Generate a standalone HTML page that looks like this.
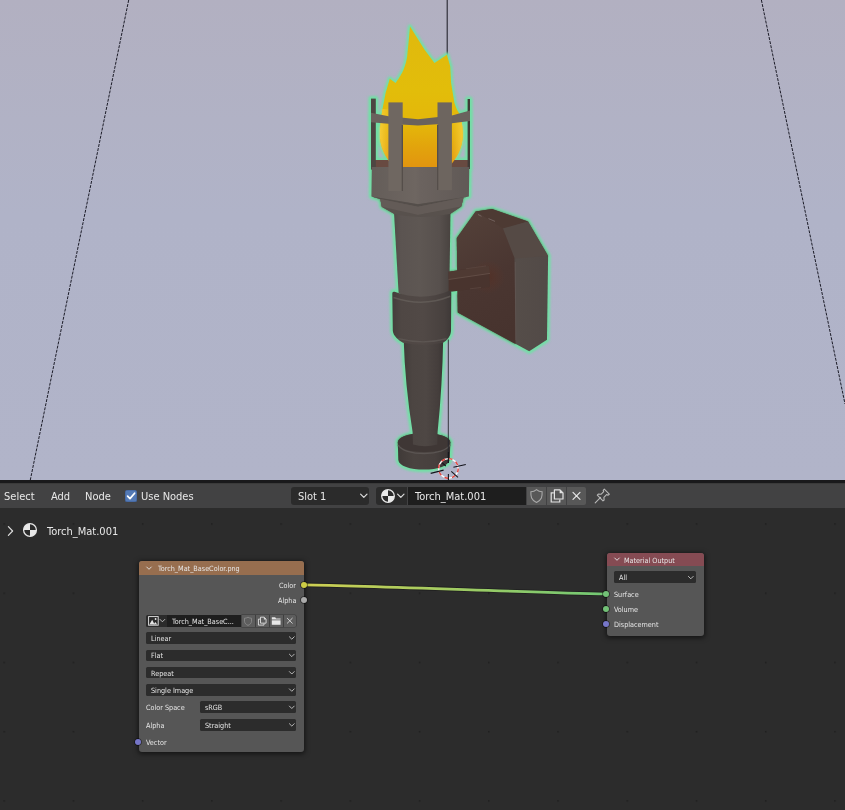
<!DOCTYPE html>
<html>
<head>
<meta charset="utf-8">
<title>Blender - Torch</title>
<style>
html,body{margin:0;padding:0;background:#2c2c2c;}
body{width:845px;height:810px;position:relative;overflow:hidden;font-family:"DejaVu Sans Condensed","DejaVu Sans","Liberation Sans",sans-serif;font-stretch:condensed;color:#e6e6e6;}
.abs{position:absolute;}
#view{position:absolute;left:0;top:0;width:845px;height:480px;background:linear-gradient(180deg,#b2b0c1 0%,#b1b2c5 25%,#b0b3c8 45%,#b1b4c9 100%);overflow:hidden;}
#sep{position:absolute;left:0;top:480px;width:845px;height:3px;background:#19191b;}
#hdr{position:absolute;left:0;top:483px;width:845px;height:24.6px;background:#424243;}
#ned{position:absolute;left:0;top:508px;width:845px;height:302px;background:#2c2c2c;overflow:hidden;}
.t11{will-change:transform;position:absolute;font-size:11px;line-height:14px;white-space:nowrap;color:#e8e8e8;}
.t7{will-change:transform;margin-top:.9px;position:absolute;font-size:7.2px;line-height:10px;white-space:nowrap;color:#e6e6e6;}
.fld{position:absolute;background:#2b2b2b;border-radius:2px;}
.btn{position:absolute;background:#585858;}
.node .btn{background:#5d5d5d;box-shadow:0 0 0 .6px #3c3c3c;}
.node{position:absolute;background:#565656;border-radius:3px;box-shadow:0 1px 5px 1px rgba(0,0,0,.55);}
.nh{position:absolute;left:0;top:0;right:0;border-radius:3px 3px 0 0;}
.sock{position:absolute;width:6px;height:6px;margin:.2px;border-radius:50%;box-shadow:0 0 0 .8px rgba(0,0,0,.5);}
.dd{position:absolute;background:#2c2c2c;border-radius:1.5px;height:11.6px;}
</style>
</head>
<body>
<div id="view">
<svg class="abs" style="left:0;top:0" width="845" height="480" viewBox="0 0 845 480">
<defs>
<linearGradient id="gFlame" x1="0" y1="26" x2="0" y2="168" gradientUnits="userSpaceOnUse">
<stop offset="0" stop-color="#e0b90e"/><stop offset=".45" stop-color="#e2bd0a"/><stop offset=".7" stop-color="#e4b60a"/><stop offset=".85" stop-color="#e2a40c"/><stop offset="1" stop-color="#e2940f"/>
</linearGradient>
<linearGradient id="gFlameEdge" x1="379" y1="0" x2="464" y2="0" gradientUnits="userSpaceOnUse">
<stop offset="0" stop-color="#f8cf3c" stop-opacity=".95"/><stop offset=".16" stop-color="#f6c830" stop-opacity="0"/><stop offset=".84" stop-color="#f6c830" stop-opacity="0"/><stop offset="1" stop-color="#f8cf3c" stop-opacity=".95"/>
</linearGradient>
<linearGradient id="gShaft" x1="394" y1="0" x2="451" y2="0" gradientUnits="userSpaceOnUse">
<stop offset="0" stop-color="#514b48"/><stop offset=".12" stop-color="#5b5451"/><stop offset=".45" stop-color="#5e5753"/><stop offset=".8" stop-color="#57504d"/><stop offset="1" stop-color="#48423f"/>
</linearGradient>
<linearGradient id="gCollar" x1="392" y1="0" x2="454" y2="0" gradientUnits="userSpaceOnUse">
<stop offset="0" stop-color="#433d3b"/><stop offset=".15" stop-color="#4f4744"/><stop offset=".5" stop-color="#514946"/><stop offset=".85" stop-color="#47403e"/><stop offset="1" stop-color="#3a3534"/>
</linearGradient>
<linearGradient id="gLow" x1="404" y1="0" x2="444" y2="0" gradientUnits="userSpaceOnUse">
<stop offset="0" stop-color="#413b39"/><stop offset=".2" stop-color="#4c4542"/><stop offset=".55" stop-color="#4e4744"/><stop offset=".85" stop-color="#453e3c"/><stop offset="1" stop-color="#393433"/>
</linearGradient>
<linearGradient id="gFoot" x1="398" y1="0" x2="451" y2="0" gradientUnits="userSpaceOnUse">
<stop offset="0" stop-color="#403a38"/><stop offset=".3" stop-color="#4a4340"/><stop offset=".7" stop-color="#47403e"/><stop offset="1" stop-color="#383332"/>
</linearGradient>
<linearGradient id="gCup" x1="371" y1="0" x2="470" y2="0" gradientUnits="userSpaceOnUse">
<stop offset="0" stop-color="#645d59"/><stop offset=".45" stop-color="#6e6661"/><stop offset=".5" stop-color="#6b635f"/><stop offset="1" stop-color="#605956"/>
</linearGradient>
<linearGradient id="gPlate" x1="457" y1="230" x2="515" y2="330" gradientUnits="userSpaceOnUse">
<stop offset="0" stop-color="#523f38"/><stop offset=".5" stop-color="#4a3631"/><stop offset="1" stop-color="#47332e"/>
</linearGradient>
<linearGradient id="gPlateSide" x1="500" y1="0" x2="548" y2="0" gradientUnits="userSpaceOnUse">
<stop offset="0" stop-color="#4e423e"/><stop offset=".35" stop-color="#554d49"/><stop offset="1" stop-color="#524a47"/>
</linearGradient>
<radialGradient id="gRust" cx="488" cy="277" r="17" gradientUnits="userSpaceOnUse"><stop offset="0" stop-color="#5a2a1c" stop-opacity=".45"/><stop offset="1" stop-color="#6a3424" stop-opacity="0"/></radialGradient>
<filter id="bl" x="-10%" y="-10%" width="120%" height="120%"><feGaussianBlur stdDeviation=".85"/></filter>
<g id="torch">
<!-- cup interior -->
<path d="M372.5,160 H468.5 V172 H372.5 Z" fill="#684a41"/>
<!-- flame -->
<path d="M396,169 C388,162 381,150 380,138 C379.5,128 381,118 382.5,109 L385.6,93 L389.8,78.8 L395.6,83 C400,77 402,73 403,71 C406,64 407,58 407.2,56 L408.8,40 L410,26.6 L416.3,36.5 L424.6,49.8 L434.5,63 L446.9,54.7 L450.2,66.3 L451.1,83 L454.4,103 C456,108 458,112 460,114.5 C462,122 463,130 462.7,137 C462,147 458,158 447,169 Z" fill="url(#gFlame)" stroke-width="4.4"/>
<path d="M396,169 C388,162 381,150 380,138 C379.5,128 381,118 382.5,109 L460,114.5 C462,122 463,130 462.7,137 C462,147 458,158 447,169 Z" fill="url(#gFlameEdge)" stroke="none"/>
<!-- basket posts -->
<rect x="371" y="98.6" width="4.8" height="71" fill="#4d4642"/>
<rect x="467.6" y="99" width="2.4" height="70" fill="#3f3b37"/>
<!-- ring band -->
<path d="M371,112.8 L388.4,116.2 L418,119.3 L451.9,115.6 L470,110.6 L470,121 L451.9,123.2 L418,125.4 L388.4,123.8 L371,122.2 Z" fill="#6a625d"/>
<!-- cup block -->
<path d="M371.8,167 L469.3,167 L468.9,196.4 L463.5,197.5 L461.2,206.5 L450,214 L418,218 L394.6,214.1 L381.8,206.7 L380.3,199 L371.4,196.4 Z" fill="url(#gCup)"/>
<path d="M371.4,196.4 L418,204.3 L468.9,196.4 L463.5,197.5 L461.2,206.5 L450,214 L418,218 L394.6,214.1 L381.8,206.7 L380.3,199 Z" fill="#625a56" stroke="none"/>
<path d="M371.4,196.4 L418,204.3 L468.9,196.4 L463.5,197.5 L418,206.8 L380.3,199 Z" fill="#544e4a" stroke="none"/>
<!-- front planks -->
<rect x="388.4" y="102.4" width="14.3" height="88.6" fill="#6f6761"/>
<rect x="437.5" y="102.4" width="14.4" height="87.8" fill="#6d655f"/>
<rect x="401.7" y="125" width="1.3" height="66" fill="#554e4a" stroke="none"/>
<rect x="437" y="125" width="1.3" height="65" fill="#554e4a" stroke="none"/>
<!-- upper shaft -->
<path d="M394,213 L450.5,211.5 L449.3,292 Q422.6,307 398.6,293 Z" fill="url(#gShaft)"/>
<path d="M380.3,199 L418,206.8 L463.5,197.5 L461.2,206.5 L418,215 L381.8,206.7 Z" fill="#635b57" stroke="none"/><path d="M381.8,206.7 L418,215 L461.2,206.5 L450,214 Q420,220 394.6,214.1 Z" fill="#58514d" stroke="none"/>
<!-- wall plate -->
<path d="M456.8,238 L475.7,211.4 L492,209 L528,221.5 L548.1,255.9 L547,339.8 L529.2,351.3 L457.8,312.5 Z" fill="url(#gPlateSide)"/>
<path d="M475.7,211.4 L492,209 L528,221.5 L503,229.6 Z" fill="#4d3a33" stroke="none"/><path d="M502.5,228.6 L528,221.5 L548.1,255.9 L514.5,258.5 Z" fill="#554a45" stroke="none"/>
<path d="M456.8,238 L475.7,211.4 L503,228.6 L514.5,258 L515.5,343.9 L457.8,312.5 Z" fill="url(#gPlate)" stroke="none"/>
<ellipse cx="488" cy="277" rx="17" ry="17" fill="url(#gRust)" stroke="none"/>
<path d="M478,214.5 L481.5,216.3 M488.5,218.6 L495,221.4" stroke="#7a6a66" stroke-width="1" fill="none" opacity=".8"/>
<path d="M515.3,262 L515.8,340" stroke="#6a5d59" stroke-width=".8" fill="none" opacity=".55"/>
<!-- bracket arm -->
<path d="M448.6,271.8 L489,265.7 L490,287 L448.6,292 Z" fill="#49342e"/>
<path d="M448.6,271.8 L489,265.7 L490,273.4 L448.6,279.5 Z" fill="#4f3a33" stroke="none"/>
<path d="M448.6,279.5 L490,273.4" stroke="#6e5a52" stroke-width=".9" fill="none" opacity=".7"/>
<path d="M466,268.8 L486,266" stroke="#6a564e" stroke-width=".8" fill="none" opacity=".5"/>
<path d="M470,288.8 L481,287.5" stroke="#6a564e" stroke-width=".8" fill="none" opacity=".55"/>
<!-- foot -->
<path d="M397.8,442.5 L398.3,460 C399,466 410,469.6 424,469.6 C438,469.6 449,466 449.8,459 L450.3,442.5 C450.3,437 438,433 424,433 C410,433 397.8,437 397.8,442.5 Z" fill="url(#gFoot)"/>
<ellipse cx="424.05" cy="442.5" rx="26.2" ry="9.5" fill="#3f3735" stroke="none"/>
<path d="M398.2,445 C401,450.5 412,453.6 424.3,453.6 C437,453.6 447.5,450 450,444.8" fill="none" stroke="#5e5856" stroke-width="1.5" opacity=".85"/>
<!-- lower shaft -->
<path d="M403.6,338 L443.2,338 Q442.4,385 437.6,432 L437.3,444.5 Q425,448 413,444.5 L412.6,432 Q405,385 403.6,338 Z" fill="url(#gLow)"/>
<!-- collar -->
<path d="M392.3,294 C392.3,292 393,291.3 394.5,291.8 Q422.6,302 449.5,290.8 C450.8,290.5 451.3,291.5 451.3,293 L451,331 C450.8,336 447,340.5 443,342.8 Q423,346.5 403,342.8 C399,340.5 393.3,336 392.8,331 Z" fill="url(#gCollar)"/>
<path d="M393.5,297.5 Q422.6,307.5 450.3,296.3" fill="none" stroke="#706965" stroke-width="1.6" opacity=".55"/>
<path d="M398.5,338.6 Q423,345 446.5,338.8" fill="none" stroke="#6a6360" stroke-width="1.4" opacity=".5"/>

</g>
</defs>
<!-- guide lines -->
<line x1="128.7" y1="0" x2="30.3" y2="480" stroke="#1c1c28" stroke-width="1" stroke-dasharray="3 1.2"/>
<line x1="761.4" y1="0" x2="845" y2="404" stroke="#1c1c28" stroke-width="1" stroke-dasharray="3 1.2"/>
<line x1="447.2" y1="0" x2="447.2" y2="56" stroke="#25252e" stroke-width="1.1"/>
<!-- selection outline -->
<use href="#torch" stroke="#72dfa5" stroke-width="5.2" stroke-linejoin="round" filter="url(#bl)"/>
<use href="#torch"/>
<line x1="448.3" y1="339.5" x2="448.3" y2="463" stroke="#26262c" stroke-width=".9"/>
<!-- 3d cursor -->
<g>
<circle cx="448.4" cy="468.4" r="9.8" fill="none" stroke="#ffffff" stroke-width="1.4"/>
<circle cx="448.4" cy="468.4" r="9.8" fill="none" stroke="#e2403a" stroke-width="1.4" stroke-dasharray="3.85 3.85"/>
<path d="M430.7,473.4 L443.6,470.1 M453.4,467.3 L465.8,464.5 M448.4,474 L448.4,480 M448.4,463 L448.4,452 M451.3,471.3 L458,477.3 M445.8,466 L442.3,462.8" stroke="#15151c" stroke-width="1.1" fill="none"/>
</g>
</svg>


</div>
<div id="sep"></div>
<div id="hdr">
<div class="abs" style="left:0;top:0;width:845px;height:1px;background:#3a3a3a"></div>
<div class="t11" style="left:4.3px;top:6.9px">Select</div>
<div class="t11" style="left:51px;top:6.9px">Add</div>
<div class="t11" style="left:85.3px;top:6.9px">Node</div>
<div class="abs" style="left:125px;top:6.5px;width:12px;height:12px;border-radius:2.5px;background:#5379b5;box-shadow:0 0 0 .5px #3e5f96 inset"></div>
<svg class="abs" style="left:125px;top:6.5px" width="12" height="12" viewBox="0 0 12 12"><path d="M2.6,6.2 L5,8.6 L9.6,3.2" fill="none" stroke="#ffffff" stroke-width="1.7" stroke-linecap="round" stroke-linejoin="round"/></svg>
<div class="t11" style="left:141.3px;top:6.9px">Use Nodes</div>
<!-- slot dropdown -->
<div class="fld" style="left:291px;top:4px;width:78px;height:17.5px;border-radius:3px;background:#2b2b2b"></div>
<div class="t11" style="left:298.3px;top:6.9px">Slot 1</div>
<svg class="abs" style="left:359px;top:9px" width="10" height="8" viewBox="0 0 10 8"><path d="M1.6,2.2 L4.8,5.4 L8,2.2" fill="none" stroke="#dcdcdc" stroke-width="1.2" stroke-linecap="round" stroke-linejoin="round"/></svg>
<!-- material selector -->
<div class="fld" style="left:376px;top:4px;width:30.8px;height:17.5px;border-radius:3px 0 0 3px;background:#2b2b2b"></div>
<svg class="abs" style="left:379.5px;top:5px" width="16" height="16" viewBox="0 0 16 16">
<circle cx="8" cy="8" r="6.3" fill="#2b2b2b" stroke="#e9e9e9" stroke-width="1.3"/>
<path d="M8,8 L8,1.7 A6.3,6.3 0 0 0 1.7,8 Z" fill="#e9e9e9"/>
<path d="M8,8 L8,14.3 A6.3,6.3 0 0 0 14.3,8 Z" fill="#e9e9e9"/>
</svg>
<svg class="abs" style="left:396px;top:9px" width="10" height="8" viewBox="0 0 10 8"><path d="M1.6,2.2 L4.8,5.4 L8,2.2" fill="none" stroke="#dcdcdc" stroke-width="1.2" stroke-linecap="round" stroke-linejoin="round"/></svg>
<div class="fld" style="left:407.6px;top:4px;width:118.8px;height:17.5px;border-radius:0;background:#1e1e1e"></div>
<div class="t11" style="left:414.6px;top:6.9px">Torch_Mat.001</div>
<div class="btn" style="left:527.3px;top:4px;width:19px;height:17.5px"></div>
<div class="btn" style="left:547.2px;top:4px;width:19px;height:17.5px"></div>
<div class="btn" style="left:567.1px;top:4px;width:19px;height:17.5px;border-radius:0 2px 2px 0"></div>
<!-- shield -->
<svg class="abs" style="left:529.3px;top:5px" width="15" height="16" viewBox="0 0 15 16"><path d="M7.5,1.6 C6,2.9 4,3.7 1.9,3.8 C1.8,5.5 1.8,8.2 2.6,10 C3.6,12.2 5.6,13.6 7.5,14.5 C9.4,13.6 11.4,12.2 12.4,10 C13.2,8.2 13.2,5.5 13.1,3.8 C11,3.7 9,2.9 7.5,1.6 Z" fill="none" stroke="#a8a8a8" stroke-width="1.1" stroke-linejoin="miter"/></svg>
<!-- duplicate -->
<svg class="abs" style="left:548.8px;top:5px" width="16" height="16" viewBox="0 0 16 16">
<path d="M4.8,4.8 L2.2,4.8 L2.2,14 L10.8,14 L10.8,11.6" fill="none" stroke="#e4e4e4" stroke-width="1.2"/>
<path d="M5.4,1.8 L11,1.8 L14,4.8 L14,11 L5.4,11 Z" fill="none" stroke="#e4e4e4" stroke-width="1.2" stroke-linejoin="round"/>
<path d="M10.6,1.8 L10.6,5.2 L14,5.2 Z" fill="#e4e4e4"/>
</svg>
<!-- X -->
<svg class="abs" style="left:569.1px;top:5px" width="15" height="16" viewBox="0 0 15 16"><path d="M4,4.4 L11,11.4 M11,4.4 L4,11.4" fill="none" stroke="#e6e6e6" stroke-width="1.2" stroke-linecap="round"/></svg>
<!-- pin -->
<svg class="abs" style="left:593px;top:4px" width="19" height="18" viewBox="0 0 19 18">
<path d="M2.2,15.8 L7.6,10.4" fill="none" stroke="#b8b8b8" stroke-width="1.1" stroke-linecap="round"/>
<path d="M11.3,2.2 L16.3,7.2 L14.9,8.2 L13.6,7.6 L10.9,10.3 L11.1,13 L10,13.9 L4.3,8.2 L5.3,7.1 L8,7.3 L10.7,4.6 L10.2,3.3 Z" fill="none" stroke="#b8b8b8" stroke-width="1.1" stroke-linejoin="round"/>
</svg>

</div>
<div id="ned">
<svg class="abs" style="left:0;top:0" width="845" height="302" viewBox="0 508 845 302">
<defs>
<pattern id="dots" x="3.4" y="523.2" width="69.23" height="69.23" patternUnits="userSpaceOnUse"><rect x="0" y="0" width="1.6" height="1.6" fill="#1f1f1f"/></pattern>
<linearGradient id="gLink" x1="304" y1="0" x2="606" y2="0" gradientUnits="userSpaceOnUse"><stop offset="0" stop-color="#cfcf52"/><stop offset="1" stop-color="#72c874"/></linearGradient>
</defs>
<rect x="0" y="508" width="845" height="302" fill="url(#dots)"/>
<path d="M304.2,584.8 C380,586 530,592.5 606.1,594" fill="none" stroke="#151515" stroke-width="4.4" opacity=".6"/>
<path d="M304.2,584.8 C380,586 530,592.5 606.1,594" fill="none" stroke="url(#gLink)" stroke-width="2.7"/>
</svg>
<!-- breadcrumb -->
<svg class="abs" style="left:6px;top:15.5px" width="10" height="14" viewBox="0 0 10 14"><path d="M2.4,2.6 L6.6,7 L2.4,11.4" fill="none" stroke="#dcdcdc" stroke-width="1.2" stroke-linecap="round" stroke-linejoin="round"/></svg>
<svg class="abs" style="left:21.8px;top:14.2px" width="16" height="16" viewBox="0 0 16 16">
<circle cx="8" cy="8" r="6.4" fill="#2c2c2c" stroke="#e9e9e9" stroke-width="1.3"/>
<path d="M8,8 L8,1.6 A6.4,6.4 0 0 0 1.6,8 Z" fill="#e9e9e9"/>
<path d="M8,8 L8,14.4 A6.4,6.4 0 0 0 14.4,8 Z" fill="#e9e9e9"/>
</svg>
<div class="t11" style="left:47.2px;top:16.6px">Torch_Mat.001</div>

<!-- Image Texture node : page coords left 138.8 top 561 -> ned coords top 53 -->
<div class="node" style="left:138.8px;top:53px;width:165px;height:190.7px">
<div class="nh" style="height:14px;background:#976e4f"></div>
<svg class="abs" style="left:6.5px;top:3.5px" width="8" height="7" viewBox="0 0 8 7"><path d="M1.7,2 L4,4.3 L6.3,2" fill="none" stroke="#e0e0e0" stroke-width=".95" stroke-linecap="round" stroke-linejoin="round"/></svg>
<div class="t7" style="left:18.9px;top:2.2px">Torch_Mat_BaseColor.png</div>
<div class="t7" style="right:7.8px;top:18.8px">Color</div>
<div class="t7" style="right:7.8px;top:34.2px">Alpha</div>
<!-- image field row : y 615.4-626.7 => node top 54.4 -->
<div class="abs" style="left:7.5px;top:54.4px;width:20.4px;height:11.4px;background:#2b2b2b;border-radius:1.5px 0 0 1.5px"></div>
<svg class="abs" style="left:9.3px;top:55.4px" width="11" height="10" viewBox="0 0 11 10"><rect x=".6" y=".6" width="9.6" height="8.6" fill="none" stroke="#e6e6e6" stroke-width=".9"/><path d="M1.4,8.6 L4.2,3.8 L6.6,8.6 Z" fill="#e6e6e6"/><path d="M5.6,8.6 L7.3,6 L9.3,8.6 Z" fill="#e6e6e6"/><circle cx="7.6" cy="3" r=".9" fill="#e6e6e6"/></svg>
<svg class="abs" style="left:20.6px;top:57.4px" width="7" height="6" viewBox="0 0 7 6"><path d="M1,1.4 L3.4,3.8 L5.8,1.4" fill="none" stroke="#dcdcdc" stroke-width=".8" stroke-linecap="round" stroke-linejoin="round"/></svg>
<div class="abs" style="left:28.6px;top:54.4px;width:73.4px;height:11.4px;background:#1e1e1e"></div>
<div class="t7" style="left:33.4px;top:55.2px">Torch_Mat_BaseC...</div>
<div class="btn" style="left:102.8px;top:54.4px;width:13.2px;height:11.4px"></div>
<div class="btn" style="left:116.9px;top:54.4px;width:13.2px;height:11.4px"></div>
<div class="btn" style="left:131px;top:54.4px;width:13px;height:11.4px"></div>
<div class="btn" style="left:144.9px;top:54.4px;width:12.8px;height:11.4px;border-radius:0 1.5px 1.5px 0"></div>
<svg class="abs" style="left:104.6px;top:55px" width="10" height="10.5" viewBox="0 0 15 16"><path d="M7.5,1.8 C5.8,3 3.8,3.4 2.2,3.4 L2.2,8 C2.2,11 4.6,13.2 7.5,14.3 C10.4,13.2 12.8,11 12.8,8 L12.8,3.4 C11.2,3.4 9.2,3 7.5,1.8 Z" fill="none" stroke="#8c8c8c" stroke-width="1.3" stroke-linejoin="round"/></svg>
<svg class="abs" style="left:118.4px;top:55px" width="10.4" height="10.4" viewBox="0 0 16 16">
<path d="M4.8,4.8 L2.2,4.8 L2.2,14 L10.8,14 L10.8,11.6" fill="none" stroke="#e0e0e0" stroke-width="1.4"/>
<path d="M5.4,1.8 L11,1.8 L14,4.8 L14,11 L5.4,11 Z" fill="none" stroke="#e0e0e0" stroke-width="1.4" stroke-linejoin="round"/>
<path d="M10.6,1.8 L10.6,5.2 L14,5.2 Z" fill="#e0e0e0"/>
</svg>
<svg class="abs" style="left:132.4px;top:55.4px" width="10.4" height="9.6" viewBox="0 0 13 12"><path d="M1,1.6 L5.2,1.6 L6.4,3 L12,3 L12,4.4 L1,4.4 Z" fill="#e6e6e6"/><path d="M1,5.4 L12,5.4 L12,11 L1,11 Z" fill="#e6e6e6"/></svg>
<svg class="abs" style="left:146.6px;top:55.4px" width="9.6" height="9.6" viewBox="0 0 15 16"><path d="M3.4,3.8 L11.6,12 M11.6,3.8 L3.4,12" fill="none" stroke="#e6e6e6" stroke-width="1.4" stroke-linecap="round"/></svg>
<!-- dropdowns -->
<div class="dd" style="left:7.2px;top:71.1px;width:150.4px"></div><div class="t7" style="left:12.6px;top:72px">Linear</div>
<div class="dd" style="left:7.2px;top:88.5px;width:150.4px"></div><div class="t7" style="left:12.6px;top:89.4px">Flat</div>
<div class="dd" style="left:7.2px;top:105.9px;width:150.4px"></div><div class="t7" style="left:12.6px;top:106.8px">Repeat</div>
<div class="dd" style="left:7.2px;top:123.2px;width:150.4px"></div><div class="t7" style="left:12.6px;top:124.1px">Single Image</div>
<div class="t7" style="left:7.4px;top:141.4px">Color Space</div>
<div class="dd" style="left:61.2px;top:140.4px;width:96.4px"></div><div class="t7" style="left:66.4px;top:141.4px">sRGB</div>
<div class="t7" style="left:7.4px;top:159px">Alpha</div>
<div class="dd" style="left:61.2px;top:158px;width:96.4px"></div><div class="t7" style="left:66.4px;top:159px">Straight</div>
<div class="t7" style="left:7.4px;top:176.4px">Vector</div>
<svg class="abs" style="left:0;top:0;overflow:visible" width="165" height="191" viewBox="0 0 165 191">
<g fill="none" stroke="#dcdcdc" stroke-width=".8" stroke-linecap="round" stroke-linejoin="round">
<path d="M150.4,75.8 L152.8,78.2 L155.2,75.8"/><path d="M150.4,93.2 L152.8,95.6 L155.2,93.2"/><path d="M150.4,110.6 L152.8,113 L155.2,110.6"/><path d="M150.4,127.9 L152.8,130.3 L155.2,127.9"/><path d="M150.4,145.1 L152.8,147.5 L155.2,145.1"/><path d="M150.4,162.7 L152.8,165.1 L155.2,162.7"/>
</g>
</svg>
<div class="sock" style="left:162.2px;top:20.6px;background:#cdcd45"></div>
<div class="sock" style="left:162.2px;top:36px;background:#ababab"></div>
<div class="sock" style="left:-3.6px;top:177.8px;background:#7676c8"></div>
</div>

<!-- Material Output node : page left 607.1 top 552.8 => ned top 44.8 -->
<div class="node" style="left:607.1px;top:44.8px;width:96.6px;height:82.8px">
<div class="nh" style="height:13.6px;background:#854b53"></div>
<svg class="abs" style="left:6.2px;top:3.3px" width="8" height="7" viewBox="0 0 8 7"><path d="M1.7,2 L4,4.3 L6.3,2" fill="none" stroke="#e0e0e0" stroke-width=".95" stroke-linecap="round" stroke-linejoin="round"/></svg>
<div class="t7" style="left:17px;top:2px">Material Output</div>
<div class="dd" style="left:6.8px;top:18.5px;width:81.8px;height:11.8px"></div><div class="t7" style="left:12px;top:19.5px">All</div>
<svg class="abs" style="left:0;top:0;overflow:visible" width="97" height="83" viewBox="0 0 97 83"><path d="M81.4,23.4 L83.8,25.8 L86.2,23.4" fill="none" stroke="#dcdcdc" stroke-width=".8" stroke-linecap="round" stroke-linejoin="round"/></svg>
<div class="t7" style="left:7.1px;top:36.4px">Surface</div>
<div class="t7" style="left:7.1px;top:51.6px">Volume</div>
<div class="t7" style="left:7.1px;top:66.7px">Displacement</div>
<div class="sock" style="left:-4.2px;top:38px;background:#72c076"></div>
<div class="sock" style="left:-4.2px;top:53.2px;background:#72c076"></div>
<div class="sock" style="left:-4.2px;top:68.3px;background:#7676c8"></div>
</div>

</div>
</body>
</html>
